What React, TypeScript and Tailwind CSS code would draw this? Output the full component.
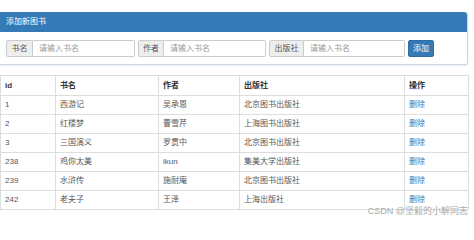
const books = [
    { id: 1, name: '西游记', author: '吴承恩', press: '北京图书出版社' },
    { id: 2, name: '红楼梦', author: '曹雪芹', press: '上海图书出版社' },
    { id: 3, name: '三国演义', author: '罗贯中', press: '北京图书出版社' },
    { id: 238, name: '鸡你太美', author: 'ikun', press: '集美大学出版社' },
    { id: 239, name: '水浒传', author: '施耐庵', press: '北京图书出版社' },
    { id: 242, name: '老夫子', author: '王泽', press: '上海出版社' },
];

function Field({ label, labelW, inputW }: { label: string; labelW: string; inputW: string }) {
    return (
        <div className="flex h-[17px]">
            <span
                className={`flex items-center justify-center rounded-l-[2px] border border-[#ccc] bg-[#eee] text-[8px] text-[#555] ${labelW}`}
            >
                {label}
            </span>
            <input
                placeholder="请输入书名"
                className={`rounded-r-[2px] border border-l-0 border-[#ccc] bg-white px-[6px] text-[8px] text-[#555] outline-none placeholder:text-[#999] ${inputW}`}
            />
        </div>
    );
}

export default function App() {
    return (
        <div
            className="relative h-[223px] w-[474px] overflow-hidden bg-white pt-[12px] text-[#333]"
            style={{ fontFamily: '"Liberation Sans", "Noto Sans CJK SC", sans-serif' }}
        >
            <div className="w-[468px] rounded-r-[3px] border-r border-b border-[#c8d5e3] shadow-[0_1px_2px_rgba(0,0,0,0.08)]">
                <div className="flex h-[20px] items-center rounded-tr-[3px] bg-[#337ab7] px-[6px] text-[8px] text-white">
                    添加新图书
                </div>
                <div className="flex gap-[3px] px-[6px] pt-[8px] pb-[7px]">
                    <Field label="书名" labelW="w-[27px]" inputW="w-[102px]" />
                    <Field label="作者" labelW="w-[26px]" inputW="w-[102px]" />
                    <Field label="出版社" labelW="w-[35px]" inputW="w-[101px]" />
                    <button className="h-[17px] w-[26px] rounded-[2px] border border-[#2e6da4] bg-[#337ab7] text-[8px] text-white">
                        添加
                    </button>
                </div>
            </div>

            <table className="mt-[10px] w-[468px] table-fixed border-collapse text-[8px]">
                <colgroup>
                    <col className="w-[55px]" />
                    <col className="w-[103px]" />
                    <col className="w-[81px]" />
                    <col className="w-[165px]" />
                    <col className="w-[64px]" />
                </colgroup>
                <thead>
                    <tr className="h-[20px]">
                        {['id', '书名', '作者', '出版社', '操作'].map((h) => (
                            <th
                                key={h}
                                className="border border-[#ddd] px-[4px] text-left font-bold text-[#333]"
                            >
                                {h}
                            </th>
                        ))}
                    </tr>
                </thead>
                <tbody>
                    {books.map((b) => (
                        <tr key={b.id} className="h-[19px] text-[#555]">
                            <td className="border border-[#ddd] px-[4px]">{b.id}</td>
                            <td className="border border-[#ddd] px-[4px]">{b.name}</td>
                            <td className="border border-[#ddd] px-[4px]">{b.author}</td>
                            <td className="border border-[#ddd] px-[4px]">{b.press}</td>
                            <td className="border border-[#ddd] px-[4px]">
                                <a className="cursor-pointer text-[#337ab7]">删除</a>
                            </td>
                        </tr>
                    ))}
                </tbody>
            </table>

            <div className="absolute right-[6px] bottom-[5px] text-[9px] text-[#aaa]">
                CSDN @坚毅的小解同志
            </div>
        </div>
    );
}
